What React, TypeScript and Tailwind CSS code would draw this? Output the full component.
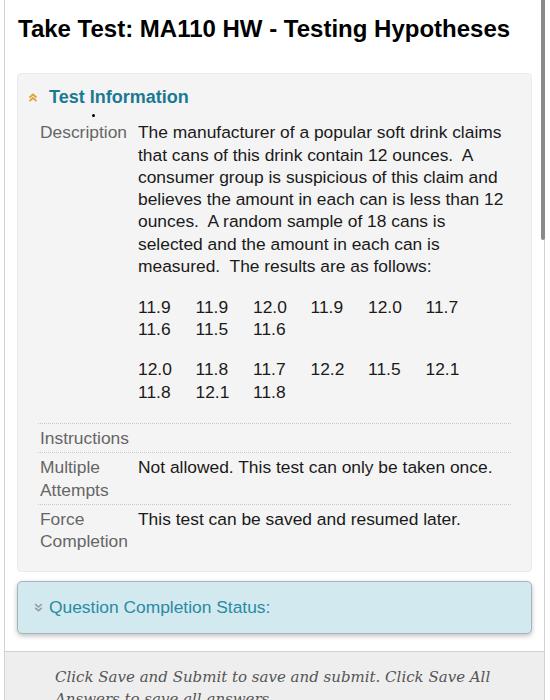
const FONT = { fontFamily: '"Liberation Sans", Arial, sans-serif' };

const groupA = [['11.9', '11.9', '12.0', '11.9', '12.0', '11.7'], ['11.6', '11.5', '11.6']];
const groupB = [['12.0', '11.8', '11.7', '12.2', '11.5', '12.1'], ['11.8', '12.1', '11.8']];

function ChevronsUp() {
  return (
    <svg width="10" height="9" viewBox="0 0 10 9" className="shrink-0">
      <polyline points="1.5,4.5 5,1.5 8.5,4.5" fill="none" stroke="#e2a33c" strokeWidth="1.8" />
      <polyline points="1.5,8 5,5 8.5,8" fill="none" stroke="#e2a33c" strokeWidth="1.8" />
    </svg>
  );
}

function ChevronsDown() {
  return (
    <svg width="9" height="9" viewBox="0 0 9 9" className="shrink-0">
      <polyline points="1.2,1.2 4.5,4 7.8,1.2" fill="none" stroke="#9a9a9a" strokeWidth="1.6" />
      <polyline points="1.2,4.8 4.5,7.6 7.8,4.8" fill="none" stroke="#9a9a9a" strokeWidth="1.6" />
    </svg>
  );
}

function NumberGroup({ rows }: { rows: string[][] }) {
  return (
    <div>
      {rows.map((row, i) => (
        <div key={i} className="flex">
          {row.map((n, j) => (
            <span key={j} className="inline-block w-[57.5px]">{n}</span>
          ))}
        </div>
      ))}
    </div>
  );
}

function InfoRow({ label, value }: { label: React.ReactNode; value?: string }) {
  return (
    <div className="flex border-t border-dotted border-[#c9c9c9] pt-[3px] pb-[3px]">
      <div className="w-[100px] shrink-0 pl-[2px] text-[#666]">{label}</div>
      <div className="text-[#1a1a1a]">{value}</div>
    </div>
  );
}

export default function App() {
  return (
    <div className="relative h-[700px] overflow-hidden bg-white" style={FONT}>
      <div className="ml-[4px] flex h-[700px] w-[541px] flex-col border-l border-r border-[#d2d2d2]">
        <h1 className="shrink-0 pl-[13px] pt-[15px] text-[24px] font-bold leading-[28px] text-black">
          Take Test: MA110 HW - Testing Hypotheses
        </h1>

        <section className="ml-[12px] mt-[30px] w-[515px] shrink-0 rounded-[4px] border border-[#ebebeb] bg-[#f4f4f4] pb-[15px] pt-[12px] text-[17.4px] leading-[22.3px]">
          <div className="flex items-center pl-[10px]">
            <ChevronsUp />
            <span className="ml-[11px] text-[18px] font-bold text-[#1b7a92]">Test Information</span>
          </div>

          <div className="relative mx-[20px] mt-[13px]">
            <span className="absolute left-[54px] top-[-7px] h-[3px] w-[3px] rounded-full bg-black" />
            <div className="flex pb-[20px]">
              <div className="w-[100px] shrink-0 pl-[2px] text-[#666]">Description</div>
              <div className="text-[#1a1a1a]">
                <p>
                  The manufacturer of a popular soft drink claims<br />
                  that cans of this drink contain 12 ounces.&nbsp; A<br />
                  consumer group is suspicious of this claim and<br />
                  believes the amount in each can is less than 12<br />
                  ounces.&nbsp; A random sample of 18 cans is<br />
                  selected and the amount in each can is<br />
                  measured.&nbsp; The results are as follows:
                </p>
                <div className="mt-[18.5px]">
                  <NumberGroup rows={groupA} />
                </div>
                <div className="mt-[18px]">
                  <NumberGroup rows={groupB} />
                </div>
              </div>
            </div>
            <InfoRow label="Instructions" />
            <InfoRow label={<>Multiple<br />Attempts</>} value="Not allowed. This test can only be taken once." />
            <InfoRow label={<>Force<br />Completion</>} value="This test can be saved and resumed later." />
          </div>
        </section>

        <div className="ml-[12px] mt-[9px] flex h-[53px] w-[515px] shrink-0 items-center rounded-[5px] border border-[#a8b4b8] bg-[#d3e9f0] pl-[16px] shadow-[0_2px_5px_rgba(0,0,0,0.25)]">
          <ChevronsDown />
          <span className="ml-[6px] text-[17.4px] text-[#2a8ba2]">Question Completion Status:</span>
        </div>

        <footer className="mt-[17px] flex-1 border-t border-[#d0d0d0] bg-[#eeeeee] pl-[50px] pr-[30px] pt-[14px]">
          <p className="text-[15px] italic leading-[22px] text-[#555]" style={{ fontFamily: '"DejaVu Serif", Georgia, serif' }}>
            Click Save and Submit to save and submit. Click Save All Answers to save all answers.
          </p>
        </footer>
      </div>

      <div className="absolute left-[541px] top-0 h-[240px] w-[4px] rounded-b-[2px] bg-[#8a8a8a]" />
    </div>
  );
}
